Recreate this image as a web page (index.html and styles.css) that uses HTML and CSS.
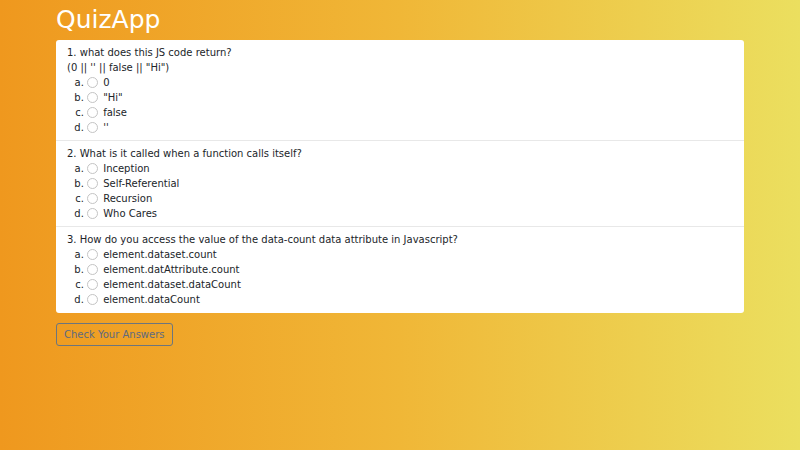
FILE: index.html
```html
<!DOCTYPE html>
<html lang="en">
<head>
    <meta charset="UTF-8">
    <meta name="viewport" content="width=device-width, initial-scale=1.0">
    <title>QuizApp</title>
    <link rel="stylesheet" href="styles.css">
</head>
<body>
    <div class="container">
        <h1 class="title">QuizApp</h1>

        <!-- Questions -->
        <form id="quiz">
            <div class="quiz-card">
                <div class="question">
                    <p>1. what does this JS code return?</p>
                    <p>(0 || '' || false || "Hi")</p>
                    <ol class="answers">
                        <li><label><input type="radio" name="q1" value="a"> 0</label></li>
                        <li><label><input type="radio" name="q1" value="b"> "Hi"</label></li>
                        <li><label><input type="radio" name="q1" value="c"> false</label></li>
                        <li><label><input type="radio" name="q1" value="d"> ''</label></li>
                    </ol>
                </div>
                <div class="question">
                    <p>2. What is it called when a function calls itself?</p>
                    <ol class="answers">
                        <li><label><input type="radio" name="q2" value="a"> Inception</label></li>
                        <li><label><input type="radio" name="q2" value="b"> Self-Referential</label></li>
                        <li><label><input type="radio" name="q2" value="c"> Recursion</label></li>
                        <li><label><input type="radio" name="q2" value="d"> Who Cares</label></li>
                    </ol>
                </div>
                <div class="question">
                    <p>3. How do you access the value of the data-count data attribute in Javascript?</p>
                    <ol class="answers">
                        <li><label><input type="radio" name="q3" value="a"> element.dataset.count</label></li>
                        <li><label><input type="radio" name="q3" value="b"> element.datAttribute.count</label></li>
                        <li><label><input type="radio" name="q3" value="c"> element.dataset.dataCount</label></li>
                        <li><label><input type="radio" name="q3" value="d"> element.dataCount</label></li>
                    </ol>
                </div>
            </div>
            <button type="submit" class="check-btn">Check Your Answers</button>
        </form>
    </div>
</body>
</html>
```

FILE: styles.css
```css
/* General Styling */
html, body {
    margin: 0;
    min-height: 100%;
}
body {
    font-family: "DejaVu Sans", sans-serif;
    font-size: 10px;
    line-height: 15px;
    color: #212529;
    background: linear-gradient(to right, #ef981e, #f0b737 50%, #ebdf5f);
    min-height: 450px;
}
.container {
    width: 688px;
    margin: 0 auto;
    padding-top: 4px;
}
.title {
    margin: 0 0 4px;
    font-size: 25px;
    line-height: 32px;
    font-weight: normal;
    color: white;
}
.quiz-card {
    background-color: white;
    border-radius: 3px;
}
.question {
    padding: 5px 11px 5px;
    border-bottom: 1px solid #e8e8e8;
}
.question:last-child {
    border-bottom: none;
    padding-bottom: 6px;
}
.question p {
    margin: 0;
}
.answers {
    list-style: lower-alpha;
    margin: 0;
    padding-left: 20px;
}
.answers input {
    appearance: none;
    width: 11px;
    height: 11px;
    margin: 0 2px 0 0;
    vertical-align: -2px;
    border: 1px solid #c4c4c4;
    border-radius: 50%;
    background: white;
}
.answers input:checked {
    border: 3px solid #2f6fd1;
}
.check-btn {
    margin-top: 10px;
    padding: 4px 7px;
    font-family: inherit;
    font-size: 10px;
    line-height: 13px;
    color: #5e6a80;
    background: transparent;
    border: 1px solid #6c757d;
    border-radius: 3px;
    cursor: pointer;
}
.check-btn:hover {
    background-color: rgba(255, 255, 255, 0.2);
}
```
